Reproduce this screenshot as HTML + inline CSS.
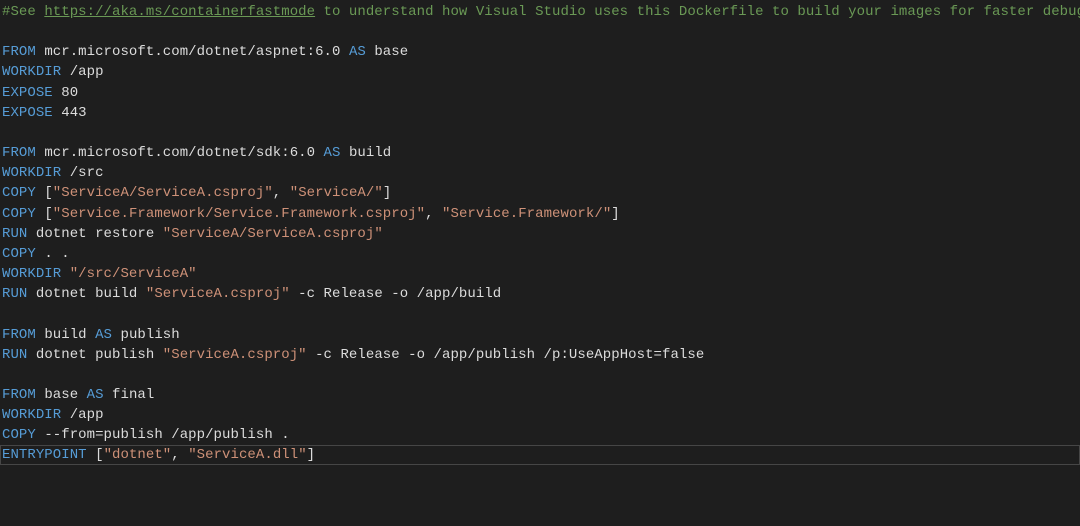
<!DOCTYPE html>
<html><head><style>
html,body{margin:0;padding:0;background:#1e1e1e;width:1080px;height:526px;overflow:hidden}
pre{margin:0;padding:0 0 0 2px;font-family:"Liberation Mono",monospace;font-size:14px;letter-spacing:0.06px;line-height:20.15px;color:#dcdcdc;white-space:pre;position:relative;top:2px}
.k{color:#569cd6}.s{color:#ce9178}.c{color:#6a9955}.u{text-decoration:underline}
.cur{position:absolute;left:0;top:445px;width:1080px;height:20px;border:1px solid #464646;box-sizing:border-box}
</style></head><body>
<div class="cur"></div>
<pre><span class="c">#See <span class="u">https://aka.ms/containerfastmode</span> to understand how Visual Studio uses this Dockerfile to build your images for faster debugging.</span>

<span class="k">FROM</span> mcr.microsoft.com/dotnet/aspnet:6.0 <span class="k">AS</span> base
<span class="k">WORKDIR</span> /app
<span class="k">EXPOSE</span> 80
<span class="k">EXPOSE</span> 443

<span class="k">FROM</span> mcr.microsoft.com/dotnet/sdk:6.0 <span class="k">AS</span> build
<span class="k">WORKDIR</span> /src
<span class="k">COPY</span> [<span class="s">"ServiceA/ServiceA.csproj"</span>, <span class="s">"ServiceA/"</span>]
<span class="k">COPY</span> [<span class="s">"Service.Framework/Service.Framework.csproj"</span>, <span class="s">"Service.Framework/"</span>]
<span class="k">RUN</span> dotnet restore <span class="s">"ServiceA/ServiceA.csproj"</span>
<span class="k">COPY</span> . .
<span class="k">WORKDIR</span> <span class="s">"/src/ServiceA"</span>
<span class="k">RUN</span> dotnet build <span class="s">"ServiceA.csproj"</span> -c Release -o /app/build

<span class="k">FROM</span> build <span class="k">AS</span> publish
<span class="k">RUN</span> dotnet publish <span class="s">"ServiceA.csproj"</span> -c Release -o /app/publish /p:UseAppHost=false

<span class="k">FROM</span> base <span class="k">AS</span> final
<span class="k">WORKDIR</span> /app
<span class="k">COPY</span> --from=publish /app/publish .
<span class="k">ENTRYPOINT</span> [<span class="s">"dotnet"</span>, <span class="s">"ServiceA.dll"</span>]</pre>
</body></html>
